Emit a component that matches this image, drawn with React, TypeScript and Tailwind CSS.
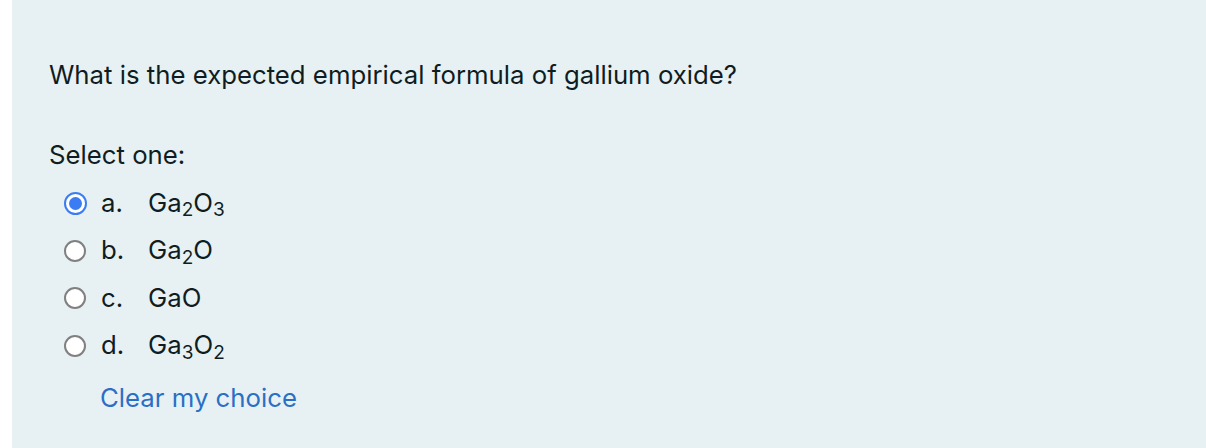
const options = [
  { letter: 'a.', label: <>Ga<sub>2</sub>O<sub>3</sub></>, checked: true },
  { letter: 'b.', label: <>Ga<sub>2</sub>O</>, checked: false },
  { letter: 'c.', label: <>GaO</>, checked: false },
  { letter: 'd.', label: <>Ga<sub>3</sub>O<sub>2</sub></>, checked: false },
]

function Radio({ checked }: { checked: boolean }) {
  if (checked) {
    return (
      <span className="flex h-[23px] w-[23px] items-center justify-center rounded-full border-[2.5px] border-[#3b7cf3] bg-white">
        <span className="h-[13px] w-[13px] rounded-full bg-[#3b7cf3]" />
      </span>
    )
  }
  return <span className="block h-[22px] w-[22px] rounded-full border-2 border-[#808080] bg-white" />
}

export default function App() {
  return (
    <div className="h-[448px] w-[1206px] bg-white pl-[12px] font-['Inter',sans-serif] text-[#0f1d22]">
      <div className="h-full bg-[#e7f1f4] pl-[37px] pt-[58px]">
        <p className="text-[25.75px] leading-[34px]">What is the expected empirical formula of gallium oxide?</p>
        <p className="mt-[46px] text-[25.75px] leading-[34px]">Select one:</p>
        <div className="mt-[14px] flex flex-col gap-[13.5px] pl-[14px]">
          {options.map((o) => (
            <label key={o.letter} className="flex h-[34px] items-center text-[25.75px]">
              <span className="flex w-[24px] justify-center">
                <Radio checked={o.checked} />
              </span>
              <span className="ml-[14px] w-[47px]">{o.letter}</span>
              <span className="[&_sub]:text-[19px] [&_sub]:leading-none">{o.label}</span>
            </label>
          ))}
        </div>
        <a className="mt-[18px] ml-[51px] block text-[25.75px] leading-[34px] text-[#2a6fc6]">Clear my choice</a>
      </div>
    </div>
  )
}
